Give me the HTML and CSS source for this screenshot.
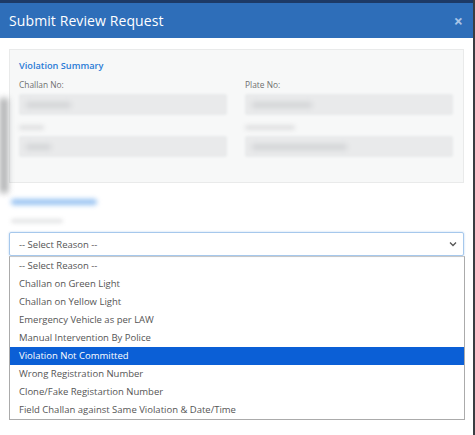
FILE: index.html
```html
<!DOCTYPE html>
<html>
  <head>
    <link rel="stylesheet" href="styles.css">
  </head>
  <body>
    <div class="modal">
      <div class="modal-header">
        <span class="modal-title">Submit Review Request</span>
        <span class="close">&times;</span>
      </div>
      <div class="modal-body">
        <div class="summary">
          <div class="summary-title">Violation Summary</div>
          <div class="summary-grid">
            <div class="field">
              <div class="field-label">Challan No:</div>
              <div class="field-input"><span class="blur-text w60"></span></div>
            </div>
            <div class="field">
              <div class="field-label">Plate No:</div>
              <div class="field-input"><span class="blur-text w70"></span></div>
            </div>
            <div class="field">
              <div class="field-label"><span class="blur-label w25"></span></div>
              <div class="field-input"><span class="blur-text w25"></span></div>
            </div>
            <div class="field">
              <div class="field-label"><span class="blur-label w50"></span></div>
              <div class="field-input"><span class="blur-text w100"></span></div>
            </div>
          </div>
        </div>

        <div class="reason">
          <div class="reason-title"></div>
          <div class="reason-sub"></div>
          <div class="select">
            <span>-- Select Reason --</span>
            <svg class="chevron" width="8" height="6" viewBox="0 0 8 6">
              <path d="M1 1.5 L4 4.5 L7 1.5" fill="none" stroke="#555" stroke-width="1.3"/>
            </svg>
          </div>
          <ul class="options">
            <li>-- Select Reason --</li>
            <li>Challan on Green Light</li>
            <li>Challan on Yellow Light</li>
            <li>Emergency Vehicle as per LAW</li>
            <li>Manual Intervention By Police</li>
            <li class="active">Violation Not Committed</li>
            <li>Wrong Registration Number</li>
            <li>Clone/Fake Registartion Number</li>
            <li>Field Challan against Same Violation &amp; Date/Time</li>
          </ul>
        </div>
      </div>
      <div class="edge-shadow"></div>
    </div>
  </body>
</html>
```

FILE: styles.css
```css
html, body {
  margin: 0;
  height: 100%;
}
body {
  background: #3a3d42;
  font-family: "Open Sans", "Noto Sans", sans-serif;
  overflow: hidden;
}
.modal {
  position: relative;
  width: 473px;
  height: 435px;
  background: #fff;
  border-top: 3px solid #1d3a66;
}
.modal-header {
  height: 35px;
  background: #2e6eb9;
  display: flex;
  align-items: center;
  justify-content: space-between;
  padding: 0 10px 0 9px;
}
.modal-title {
  color: #fff;
  font-size: 14px;
  letter-spacing: 0.1px;
}
.close {
  color: #a9c4e6;
  font-size: 16px;
  font-weight: bold;
  line-height: 1;
}
.modal-body {
  padding: 11px 9px 0 9px;
}
.summary {
  height: 134px;
  box-sizing: border-box;
  background: #f7f8f8;
  border: 1px solid #e9eaea;
  padding: 8px 10px 0 9px;
}
.summary-title {
  color: #2a7bd6;
  font-size: 9.2px;
  font-weight: 600;
  height: 16px;
  line-height: 16px;
}
.summary-grid {
  display: grid;
  grid-template-columns: 208px 208px;
  column-gap: 18px;
  row-gap: 6px;
  margin-top: 5px;
}
.field-label {
  font-size: 8.4px;
  color: #6f6f6f;
  height: 12px;
  line-height: 12px;
  margin-bottom: 3px;
}
.field-input {
  height: 21px;
  background: #e9eaeb;
  border-radius: 2px;
  display: flex;
  align-items: center;
  padding-left: 7px;
  filter: blur(0.8px);
}
.blur-text {
  display: inline-block;
  height: 6px;
  background: #d2d4d6;
  border-radius: 3px;
  filter: blur(2.6px);
}
.blur-label {
  display: inline-block;
  height: 5px;
  background: #e0e1e2;
  border-radius: 2px;
  filter: blur(2.2px);
  vertical-align: middle;
}
.w25 { width: 25px; }
.w50 { width: 50px; }
.w60 { width: 45px; }
.w70 { width: 60px; }
.w100 { width: 95px; }

.reason {
  padding-top: 16px;
}
.reason-title {
  width: 86px;
  height: 6px;
  margin-left: 2px;
  background: #98c3f2;
  border-radius: 3px;
  filter: blur(2.6px);
}
.reason-sub {
  width: 52px;
  height: 4px;
  margin: 14px 0 0 2px;
  background: #e2e3e4;
  border-radius: 2px;
  filter: blur(2px);
}
.select {
  margin-top: 9px;
  height: 24px;
  box-sizing: border-box;
  border: 1px solid #a6c8ec;
  border-radius: 2px;
  box-shadow: 0 0 2px rgba(120, 170, 230, 0.6);
  display: flex;
  align-items: center;
  justify-content: space-between;
  padding: 0 6px 0 9px;
  font-size: 9.5px;
  color: #555;
}
.options {
  list-style: none;
  margin: 0;
  padding: 0;
  width: 454px;
  border: 1px solid #ababab;
  border-top-color: #c8c8c8;
  font-size: 9.5px;
  color: #555;
}
.options li {
  height: 18px;
  line-height: 18px;
  padding-left: 9px;
}
.options li.active {
  background: #0b5fd6;
  color: #fff;
}
.edge-shadow {
  position: absolute;
  left: 0;
  top: 95px;
  width: 8px;
  height: 95px;
  background: #909294;
  filter: blur(3px);
  opacity: 0.75;
}
```
